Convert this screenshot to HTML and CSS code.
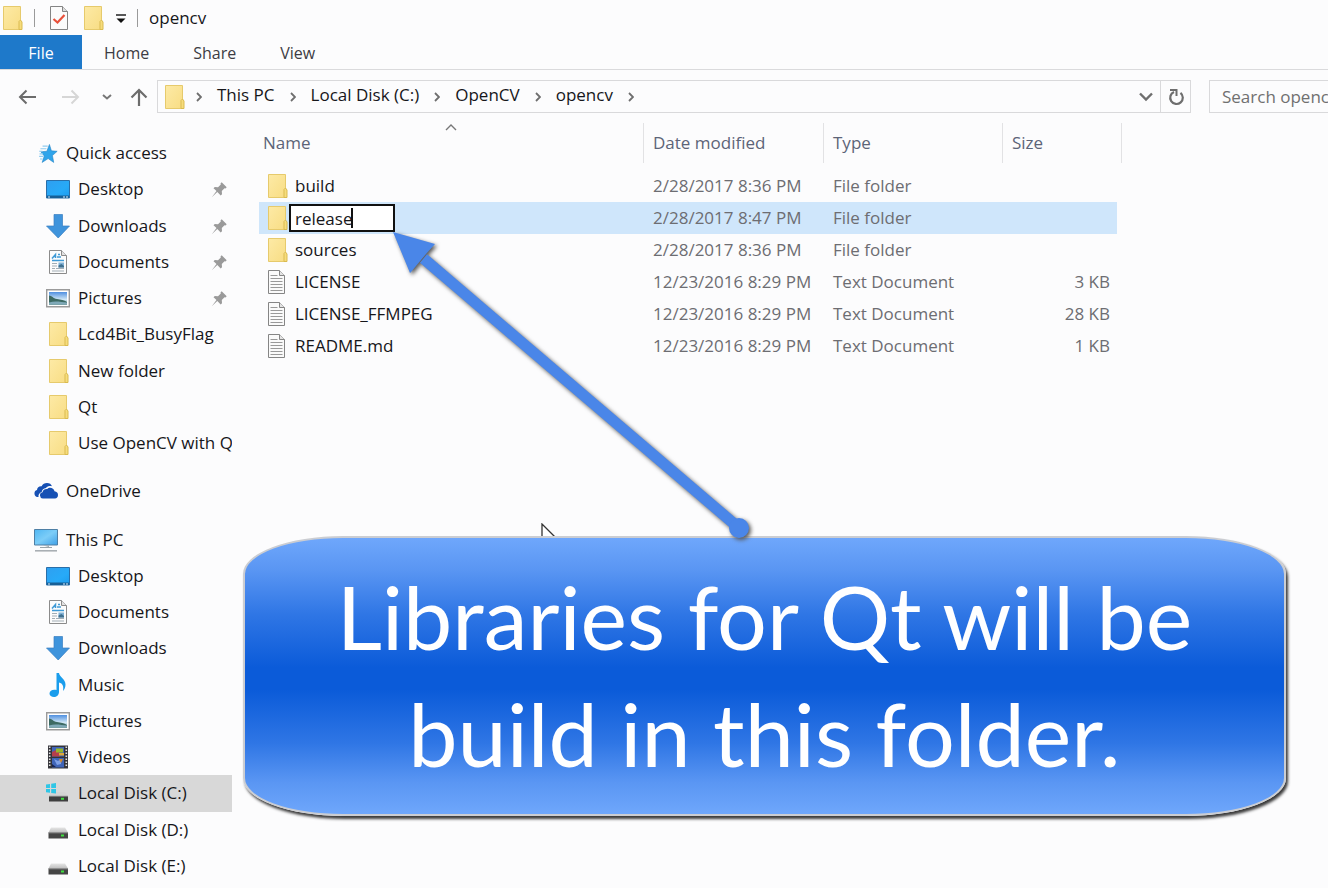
FILE: index.html
```html
<!DOCTYPE html>
<html lang="en">
<head>
<meta charset="utf-8">
<title>opencv</title>
<link rel="stylesheet" href="styles.css">
</head>
<body>
<svg class="defs" aria-hidden="true">
  <defs>
    <linearGradient id="g-folder" x1="0" y1="0" x2="1" y2="1"><stop offset="0" stop-color="#fdeaa6"/><stop offset="1" stop-color="#f8dd84"/></linearGradient>
    <linearGradient id="g-screen" x1="0" y1="0" x2="1" y2="1"><stop offset="0" stop-color="#2f9ff0"/><stop offset=".6" stop-color="#27aaf8"/><stop offset="1" stop-color="#1b9bee"/></linearGradient>
    <linearGradient id="g-pc" x1="0" y1="0" x2="1" y2="1"><stop offset="0" stop-color="#4fb6f2"/><stop offset=".5" stop-color="#7ccdf8"/><stop offset="1" stop-color="#3f9fe6"/></linearGradient>
    <linearGradient id="g-sky" x1="0" y1="0" x2="0" y2="1"><stop offset="0" stop-color="#4f8fe0"/><stop offset=".6" stop-color="#cfe6f5"/><stop offset="1" stop-color="#6fa0a8"/></linearGradient>
    <linearGradient id="g-disk" x1="0" y1="0" x2="0" y2="1"><stop offset="0" stop-color="#e6e6e6"/><stop offset="1" stop-color="#bdbdbd"/></linearGradient>
    <symbol id="folder" viewBox="0 0 24 24"><path d="M3.500.5h17v23h-17z" fill="url(#g-folder)" stroke="#e6ca6c"/><path d="M19 23.500v-8l1.500-1.500 1.500 2v7.500z" fill="#f6dc7c" stroke="#dabb50"/></symbol>
    <symbol id="desktop" viewBox="0 0 24 24"><path d="M.5 3.500h23v17.500H.5z" fill="url(#g-screen)" stroke="#2a6ea8"/><path d="M1 18.500h22v2.500H1z" fill="#175f96"/><path d="M2 20h2M17 20h2M20 20h2" stroke="#d8efff"/></symbol>
    <symbol id="download" viewBox="0 0 24 24"><path d="M8 .5h8.500V12H23.500L12.200 24 .5 12H8z" fill="#3f94dc" stroke="#3a80c2" stroke-width=".7"/></symbol>
    <symbol id="document" viewBox="0 0 24 24"><path d="M3.500.5h12l5 5v18h-17z" fill="#fcfcfc" stroke="#8b8b8b"/><path d="M15.500.5v5h5" fill="#e2e2e2" stroke="#8b8b8b"/><path d="M6 8.500l3.500-4V8M12 4.500h2M11 7h4M6 10.500h12" stroke="#3f9ad6" stroke-width="1.500" fill="none"/><path d="M6 13.500h5M6 16h5M6 18.500h3M10 18.500h8M6 21h12" stroke="#a2adb5"/><path d="M12.500 12.500h5.500v5h-5.500z" fill="#7fb0d4"/><path d="M12.500 15.500l3-1.500 2.500 2v1.500h-5.500z" fill="#40708f"/></symbol>
    <symbol id="picture" viewBox="0 0 24 24"><path d="M.7 3.700h22.600v17H.7z" fill="#fff" stroke="#9b9b9b" stroke-width="1.400"/><path d="M3 6h18v12.500H3z" fill="url(#g-sky)"/><path d="M3 9.500c3 0 4 3 8 3.500s7 1 10 3v2.500H3z" fill="#3d6a63"/><path d="M3 16.500c6-2 12-.5 18 0v2H3z" fill="#7fa9b8"/></symbol>
    <symbol id="onedrive" viewBox="0 0 24 24"><path d="M4.500 18H3.500A3.600 3.600 0 0 1 3 11a4.300 4.300 0 0 1 4.600-3.700A6.200 6.200 0 0 1 13 4c2.500 0 4.300 1.200 5 3.300-2.500-.6-4.500 0-6 1.600-2.500.2-4 1.800-4.300 4-2.300.7-3.600 2.600-3.200 5.100z" fill="#1650b4"/><path d="M8.800 19.500a3.200 3.200 0 0 1-.3-6.300 4.400 4.400 0 0 1 4.700-3.200c2-2.400 6.700-1.500 7.300 2.300 2.400.3 3.500 1.700 3.500 3.700s-1.300 3.500-3 3.500z" fill="#1650b4"/></symbol>
    <symbol id="pc" viewBox="0 0 24 24"><path d="M.5 1.500h23v15.500H.5z" fill="url(#g-pc)" stroke="#4e7fa5"/><path d="M9 17.500h6v1.500H6v1h12v-1h-3" fill="#9ba4aa"/><path d="M1 22.800h22" stroke="#a9afb4" stroke-width="1.600"/></symbol>
    <symbol id="music" viewBox="0 0 24 24"><path d="M10.500 0h2.500c.5 4 6.500 6 6.500 11.500 0 3-1 5-2.500 6.500.8-4.500 0-7.500-4-8.500v9.500c0 3-2.500 5-5 5s-4.500-1.300-4.500-3.500c0-3 3.500-4.500 7-3.500z" fill="#1a9dec"/></symbol>
    <symbol id="video" viewBox="0 0 24 24"><path d="M2 .5h20v23H2z" fill="#34343a"/><path d="M3.700 1.500v21M20.300 1.500v21" stroke="#e2e2e2" stroke-width="1.600" stroke-dasharray="1.600 1.400"/><path d="M6 2h12v9.500H6zM6 13h12v9.500H6z" fill="#3f64b8"/><path d="M6 7l4-2 4 3v3.500H6z" fill="#b63f4c"/><path d="M10 3.500h7v4h-7z" fill="#97b72c"/><path d="M13 8h5v2.500h-5z" fill="#e0a83a"/><path d="M8 14l4 2 3-2v5l-4 1z" fill="#7fa0e6"/><path d="M13 14h4l-2 4z" fill="#d28b2c"/><path d="M6 19l4 3H6z" fill="#19224d"/></symbol>
    <symbol id="disk" viewBox="0 0 24 24"><path d="M5 9.500h14l3 5H2.500z" fill="url(#g-disk)"/><path d="M2.500 14.500H22v6H2.500z" fill="#454545"/><path d="M2.500 14.800H22" stroke="#8f8f8f"/><path d="M15 17.500h3" stroke="#3fe03f" stroke-width="2"/></symbol>
    <symbol id="sysdisk" viewBox="0 0 24 24"><path d="M5 11h14l3 4H3z" fill="#d4d4d4"/><path d="M3 15h19v5.500H3z" fill="#3f3f3f"/><path d="M3 15.300h19" stroke="#858585"/><path d="M15 17.800h3" stroke="#3fe03f" stroke-width="2"/><path d="M0 3.500l4-.6v4H0zM5.200 2.700l4.800-.7v4.900H5.200zM0 8h4v3.800l-4-.5zM5.200 8H10v4.600l-4.800-.7z" fill="#2fc6e6"/></symbol>
    <symbol id="star" viewBox="-4 -3 28 28"><path d="M14 1l2.300 7.500 6.700.5-5.500 5 1.500 8-6.500-4.500L5.500 22 8 14.500 4 9.500l7-.5z" fill="#2fa4ea" stroke="#2784c6" stroke-width=".7"/><path d="M6 3h6M3.500 6h7M2 9h4M2.500 12h4M2 15h5M3 18h3" stroke="#8fcbf0" stroke-width="1.300"/></symbol>
    <symbol id="pin" viewBox="0 0 16 16"><path d="M9.500 1.500l1.200-1.200 5 5-1.200 1.200-1-.3-2.700 2.900.2 3.100-1.300 1.300L6.300 10 .8 15.300 5.500 9 2.500 6.200l1.300-1.300 3.200.3 2.800-2.800z" fill="#9a9a9a"/></symbol>
    <symbol id="textfile" viewBox="2 0 24 24"><path d="M5.500.5h11l5 5v18h-16z" fill="#fafafa" stroke="#858585"/><path d="M16.500.5v5h5" fill="#e4e4e4" stroke="#858585"/><path d="M7.500 5.500h7M7.500 8.500h12M7.500 11.500h12M7.500 14.500h12M7.500 17.500h12M7.500 20.500h12" stroke="#999" stroke-width="1.200"/></symbol>
    <symbol id="sep" viewBox="0 0 6 10"><path d="M1 1l4 4-4 4" fill="none" stroke="#6e6e6e" stroke-width="1.800"/></symbol>
  </defs>
</svg>

<div class="window">
  <header class="titlebar">
    <svg class="icon"><use href="#folder"/></svg>
    <span class="divider"></span>
    <button class="tool" aria-label="Properties"><svg class="icon" viewBox="0 0 24 24"><path d="M3.500.5h12l5 5v18h-17z" fill="#fbfbfb" stroke="#848484"/><path d="M15.500.5v5h5" fill="#ddd" stroke="#848484"/><path d="M6.500 13l4 3.500L17.500 9" fill="none" stroke="#e8503a" stroke-width="2.200"/></svg></button>
    <button class="tool" aria-label="New folder"><svg class="icon"><use href="#folder"/></svg></button>
    <button class="tool customize" aria-label="Customize toolbar"><svg width="12" height="10" viewBox="0 0 12 10"><path d="M1 1h10" stroke="#111" stroke-width="1.400"/><path d="M1.500 4.500h9L6 9z" fill="#111"/></svg></button>
    <span class="divider"></span>
    <h1 class="title">opencv</h1>
  </header>

  <nav class="ribbon" aria-label="Ribbon">
    <button class="tab tab-file">File</button>
    <button class="tab">Home</button>
    <button class="tab">Share</button>
    <button class="tab">View</button>
  </nav>

  <div class="navbar">
    <div class="history">
      <button class="tool back" aria-label="Back"><svg width="18" height="16" viewBox="0 0 18 16"><path d="M18 8H2M8.500 1.500L2 8l6.500 6.500" fill="none" stroke="#6c6c6c" stroke-width="2"/></svg></button>
      <button class="tool forward" aria-label="Forward"><svg width="18" height="16" viewBox="0 0 18 16"><path d="M0 8h16M9.500 1.500L16 8l-6.500 6.500" fill="none" stroke="#d6d6d6" stroke-width="2"/></svg></button>
      <button class="tool" aria-label="Recent"><svg width="10" height="6" viewBox="0 0 10 6"><path d="M1 1l4 3.500L9 1" fill="none" stroke="#777" stroke-width="2"/></svg></button>
      <button class="tool" aria-label="Up"><svg width="18" height="18" viewBox="0 0 18 18"><path d="M9 18V2M1.500 9.500L9 2l7.500 7.500" fill="none" stroke="#6c6c6c" stroke-width="2.200"/></svg></button>
    </div>
    <div class="address">
      <svg class="icon"><use href="#folder"/></svg>
      <svg class="sep"><use href="#sep"/></svg><a class="crumb" href="#">This PC</a>
      <svg class="sep"><use href="#sep"/></svg><a class="crumb" href="#">Local Disk (C:)</a>
      <svg class="sep"><use href="#sep"/></svg><a class="crumb" href="#">OpenCV</a>
      <svg class="sep"><use href="#sep"/></svg><a class="crumb" href="#">opencv</a>
      <svg class="sep"><use href="#sep"/></svg>
      <button class="tool drop" aria-label="Previous locations"><svg width="14" height="10" viewBox="0 0 14 10"><path d="M1 1.500l6 6 6-6" fill="none" stroke="#6e6e6e" stroke-width="2.400"/></svg></button>
      <button class="tool refresh" aria-label="Refresh"><svg width="16" height="18" viewBox="0 0 16 18"><path d="M12.500 4.800a6.300 6.300 0 1 1-6.500-.9" fill="none" stroke="#6e6e6e" stroke-width="2.200"/><path d="M2 2h6.500v6" fill="none" stroke="#6e6e6e" stroke-width="2"/></svg></button>
    </div>
    <input class="search" type="text" placeholder="Search opencv" aria-label="Search opencv">
  </div>

  <div class="body">
    <nav class="sidebar" aria-label="Folders">
      <a class="place root" href="#"><svg class="icon"><use href="#star"/></svg>Quick access</a>
      <a class="place" href="#"><svg class="icon"><use href="#desktop"/></svg>Desktop<svg class="pin"><use href="#pin"/></svg></a>
      <a class="place" href="#"><svg class="icon"><use href="#download"/></svg>Downloads<svg class="pin"><use href="#pin"/></svg></a>
      <a class="place" href="#"><svg class="icon"><use href="#document"/></svg>Documents<svg class="pin"><use href="#pin"/></svg></a>
      <a class="place" href="#"><svg class="icon"><use href="#picture"/></svg>Pictures<svg class="pin"><use href="#pin"/></svg></a>
      <a class="place" href="#"><svg class="icon"><use href="#folder"/></svg>Lcd4Bit_BusyFlag</a>
      <a class="place" href="#"><svg class="icon"><use href="#folder"/></svg>New folder</a>
      <a class="place" href="#"><svg class="icon"><use href="#folder"/></svg>Qt</a>
      <a class="place" href="#"><svg class="icon"><use href="#folder"/></svg>Use OpenCV with Qt</a>
      <a class="place root spaced" href="#"><svg class="icon"><use href="#onedrive"/></svg>OneDrive</a>
      <a class="place root spaced" href="#"><svg class="icon"><use href="#pc"/></svg>This PC</a>
      <a class="place" href="#"><svg class="icon"><use href="#desktop"/></svg>Desktop</a>
      <a class="place" href="#"><svg class="icon"><use href="#document"/></svg>Documents</a>
      <a class="place" href="#"><svg class="icon"><use href="#download"/></svg>Downloads</a>
      <a class="place" href="#"><svg class="icon"><use href="#music"/></svg>Music</a>
      <a class="place" href="#"><svg class="icon"><use href="#picture"/></svg>Pictures</a>
      <a class="place" href="#"><svg class="icon"><use href="#video"/></svg>Videos</a>
      <a class="place current" href="#"><svg class="icon"><use href="#sysdisk"/></svg>Local Disk (C:)</a>
      <a class="place" href="#"><svg class="icon"><use href="#disk"/></svg>Local Disk (D:)</a>
      <a class="place" href="#"><svg class="icon"><use href="#disk"/></svg>Local Disk (E:)</a>
    </nav>

    <main class="content">
      <table class="files">
        <colgroup><col class="c-name"><col class="c-date"><col class="c-type"><col class="c-size"></colgroup>
        <thead>
          <tr>
            <th>Name<svg class="sort" viewBox="0 0 12 7"><path d="M1 6l5-5 5 5" fill="none" stroke="#777" stroke-width="1.400"/></svg></th>
            <th>Date modified</th><th>Type</th><th>Size</th>
          </tr>
        </thead>
        <tbody>
          <tr><td><div class="name"><svg class="icon"><use href="#folder"/></svg>build</div></td><td>2/28/2017 8:36 PM</td><td>File folder</td><td></td></tr>
          <tr class="selected"><td><div class="name"><svg class="icon"><use href="#folder"/></svg><span class="rename"><input class="rename-input" type="text" value="release" aria-label="Folder name"><span class="caret"></span></span></div></td><td>2/28/2017 8:47 PM</td><td>File folder</td><td></td></tr>
          <tr><td><div class="name"><svg class="icon"><use href="#folder"/></svg>sources</div></td><td>2/28/2017 8:36 PM</td><td>File folder</td><td></td></tr>
          <tr><td><div class="name"><svg class="icon"><use href="#textfile"/></svg>LICENSE</div></td><td>12/23/2016 8:29 PM</td><td>Text Document</td><td>3 KB</td></tr>
          <tr><td><div class="name"><svg class="icon"><use href="#textfile"/></svg>LICENSE_FFMPEG</div></td><td>12/23/2016 8:29 PM</td><td>Text Document</td><td>28 KB</td></tr>
          <tr><td><div class="name"><svg class="icon"><use href="#textfile"/></svg>README.md</div></td><td>12/23/2016 8:29 PM</td><td>Text Document</td><td>1 KB</td></tr>
        </tbody>
      </table>
    </main>
  </div>

  <svg class="cursor" viewBox="0 0 16 24"><path d="M1 1v20l5-5 4 8 3-1-4-8h6z" fill="#fff" stroke="#333" stroke-width="1.300"/></svg>
  <aside class="callout"><p class="callout-text">Libraries for Qt will be<br>build in this folder.</p></aside>
  <svg class="arrow" viewBox="0 0 370 320"><path d="M31.500 26.500L347 296" stroke="#4a86e8" stroke-width="11"/><path d="M1 0l42 12-9 10-15 18-1 1z" fill="#4a86e8"/><circle cx="347" cy="296" r="10" fill="#4a86e8"/></svg>
</div>
</body>
</html>
```

FILE: styles.css
```css
* { box-sizing: border-box; }

body {
  margin: 0;
  background: #fcfcfd;
  color: #16161a;
  font: 17px/24px "Open Sans", "Noto Sans", sans-serif;
}

button, input { font: inherit; color: inherit; }
a { color: inherit; text-decoration: none; }
svg { display: block; flex: none; }

.defs { position: absolute; width: 0; height: 0; }
.icon { width: 24px; height: 24px; }

.window {
  position: relative;
  display: flex;
  flex-direction: column;
  min-height: 100vh;
  overflow: hidden;
}

.tool {
  display: flex;
  align-items: center;
  justify-content: center;
  padding: 0;
  border: 0;
  background: none;
}

/* Title bar */
.titlebar {
  display: flex;
  align-items: center;
  gap: 10px;
  height: 35px;
}
.divider { width: 1px; height: 18px; margin-right: 2px; background: #9a9a9a; }
.customize { margin-top: 2px; }
.title { margin: 0 0 0 -1px; font-size: 17px; font-weight: 400; }

/* Ribbon */
.ribbon {
  display: flex;
  height: 35px;
  border-bottom: 1px solid #dadadc;
}
.tab {
  padding: 2px 22px 0;
  border: 0;
  background: none;
  color: #3c3c44;
  font-size: 16px;
}
.tab-file {
  width: 82px;
  background: #1e79ca;
  color: #fff;
}

/* Address row */
.navbar {
  display: flex;
  align-items: center;
  padding-top: 10px;
}
.history {
  display: flex;
  align-items: center;
  gap: 18px;
  width: 157px;
  padding-left: 18px;
}
.back { margin-right: 8px; }
.forward { margin-right: 4px; }
.address {
  display: flex;
  flex: 1;
  align-items: center;
  height: 33px;
  margin-right: 18px;
  padding-left: 4px;
  border: 1px solid #d9d9db;
}
.sep { width: 6px; height: 10px; margin: 0 15px; }
.address .icon + .sep { margin-left: 10px; }
.crumb { padding-bottom: 3px; }
.drop { margin-left: auto; width: 28px; height: 31px; }
.refresh { width: 30px; height: 31px; border-left: 1px solid #d9d9db; }
.search {
  width: 119px;
  height: 33px;
  padding: 0 0 0 12px;
  border: 1px solid #d9d9db;
  border-right: 0;
  border-radius: 0;
  background: none;
}
.search::placeholder { color: #707070; opacity: 1; }

/* Body */
.body { display: flex; flex: 1; }

.sidebar {
  display: flex;
  flex-direction: column;
  width: 232px;
  padding: 22px 0 4px;
}
.place {
  display: flex;
  flex: 1 0 36px;
  align-items: center;
  gap: 8px;
  padding-left: 46px;
  overflow: hidden;
  white-space: nowrap;
}
.root { padding-left: 34px; }
.spaced { margin-top: 12px; }
.current { background: #d8d8d8; }
.pin { width: 16px; height: 16px; margin: 2px 5px 0 auto; }

.content { flex: 1; padding: 10px 16px 0 27px; }

.files {
  width: 863px;
  table-layout: fixed;
  border-collapse: separate;
  border-spacing: 0;
  color: #6d6d72;
}
.c-name { width: 385px; }
.c-date { width: 180px; }
.c-type { width: 179px; }
.c-size { width: 119px; }
.files th {
  position: relative;
  height: 40px;
  padding: 0 0 0 9px;
  border-right: 1px solid #e2e2e4;
  color: #5c6478;
  font-weight: 400;
  text-align: left;
}
.files th:first-child { padding-left: 4px; }
.files thead::after { content: ""; display: block; height: 7px; }
.sort { position: absolute; top: 1px; left: 0; right: 0; width: 12px; height: 7px; margin: 0 auto; }
.files td { height: 32px; padding: 0 0 0 9px; }
.files td:first-child { padding-left: 6px; color: #16161a; }
.files td:last-child {
  padding-right: 7px;
  border-right: 5px solid transparent;
  background-clip: padding-box;
  text-align: right;
}
.selected td { background-color: #cfe6fb; }
.name { display: flex; align-items: center; gap: 6px; }
.rename { position: relative; margin-left: -6px; }
.rename-input {
  display: block;
  width: 106px;
  height: 28px;
  padding: 0 4px;
  border: 2px solid #111;
  border-radius: 0;
  background: #fff;
  outline: 0;
}
.caret { position: absolute; top: 4px; left: 62px; width: 2px; height: 20px; background: #111; }

/* Annotation over the window */
.cursor { position: absolute; top: 523px; left: 541px; width: 16px; height: 24px; }
.callout {
  position: absolute;
  top: 536px;
  left: 243px;
  right: 42px;
  display: flex;
  align-items: center;
  justify-content: center;
  padding: 20px 0 22px;
  border: 2px solid #cbcdd2;
  border-radius: 100px / 38px;
  background: linear-gradient(#70a8fc 0%, #5a96f3 12%, #2f76e5 28%, #0b5bd9 47%, #0b5bd9 55%, #2f76e5 74%, #5a96f3 88%, #70a8fc 100%);
  background-origin: border-box;
  box-shadow: 2px 3px 3px #3a3a3a;
}
.callout-text {
  margin: 0;
  color: #fff;
  font-family: Lato, "Open Sans", sans-serif;
  font-size: 88px;
  line-height: 117px;
  text-align: center;
  white-space: nowrap;
}
.arrow {
  position: absolute;
  top: 232px;
  left: 392px;
  width: 370px;
  height: 320px;
  filter: drop-shadow(2px 2px 2px #555);
}
```
